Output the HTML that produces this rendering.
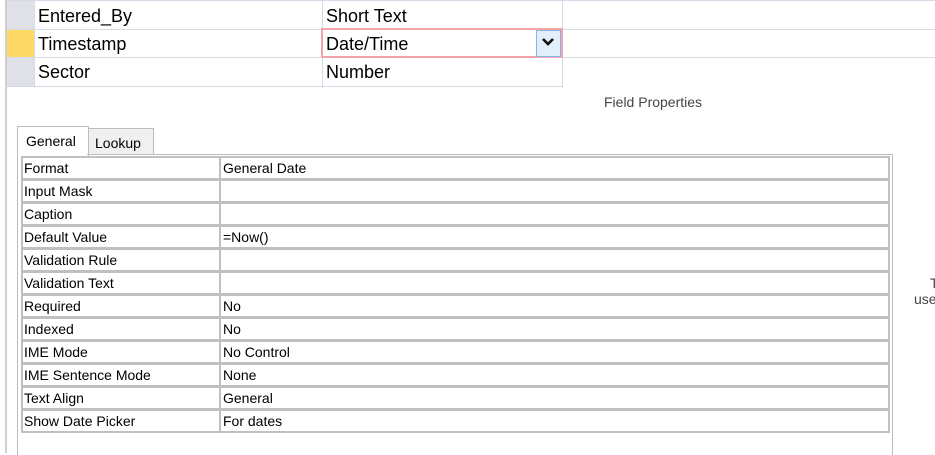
<!DOCTYPE html>
<html><head><style>
body{margin:0;width:935px;height:453px;background:#fff;position:relative;overflow:hidden;font-family:"Liberation Sans",sans-serif;}
.a{position:absolute;}
.big{font-size:18px;color:#000;}
.sm{font-size:14px;color:#000;}
</style></head><body>
<div class="a" style="left:5px;top:0;width:2px;height:453px;background:#d0d0d0"></div>
<div class="a" style="left:7px;top:0;width:928px;height:1px;background:#d4dbe6"></div>
<div class="a" style="left:7px;top:29px;width:928px;height:1px;background:#d4dbe6"></div>
<div class="a" style="left:7px;top:57px;width:928px;height:1px;background:#d4dbe6"></div>
<div class="a" style="left:7px;top:86px;width:556px;height:1px;background:#d4dbe6"></div>
<div class="a" style="left:7px;top:1px;width:27px;height:28px;background:#dfe1e6"></div>
<div class="a" style="left:7px;top:30px;width:27px;height:27px;background:#fdd966"></div>
<div class="a" style="left:7px;top:58px;width:27px;height:28px;background:#dfe1e6"></div>
<div class="a" style="left:34px;top:0;width:1px;height:88px;background:#d4dbe6"></div>
<div class="a" style="left:322px;top:0;width:1px;height:88px;background:#d4dbe6"></div>
<div class="a" style="left:562px;top:0;width:1px;height:88px;background:#d4dbe6"></div>
<div class="a big" style="left:38px;top:6px">Entered_By</div>
<div class="a big" style="left:38px;top:34px">Timestamp</div>
<div class="a big" style="left:38px;top:62px">Sector</div>
<div class="a big" style="left:326px;top:6px">Short Text</div>
<div class="a" style="left:321px;top:28px;width:238px;height:26px;border:2px solid #f2a4aa"></div>
<div class="a big" style="left:326px;top:34px">Date/Time</div>
<div class="a big" style="left:326px;top:62px">Number</div>
<div class="a" style="left:536px;top:30px;width:23px;height:25px;background:#e3eefb;border:1px solid #86b6ea"></div>
<svg class="a" style="left:540px;top:36px" width="16" height="12"><path d="M3 3 L8 8 L13 3" stroke="#111" stroke-width="2.6" fill="none"/></svg>
<div class="a" style="left:604px;top:94px;font-size:14px;color:#444">Field Properties</div>
<div class="a" style="left:17px;top:126px;width:70px;height:30px;border:1px solid #bdbdbd;border-bottom:none;background:#fff"></div>
<div class="a sm" style="left:26px;top:133px">General</div>
<div class="a" style="left:88px;top:128px;width:64px;height:26px;border:1px solid #bdbdbd;border-bottom:none;background:#f0f0f0"></div>
<div class="a sm" style="left:95px;top:135px">Lookup</div>
<div class="a" style="left:17px;top:154px;width:874px;height:300px;border-left:1px solid #bdbdbd;border-right:1px solid #bdbdbd;border-top:1px solid #bdbdbd"></div>
<div class="a" style="left:88px;top:154px;width:64px;height:1px;background:#bdbdbd"></div>
<div class="a" style="left:18px;top:154px;width:69px;height:1px;background:#fff"></div>
<div class="a" style="left:21px;top:156px;width:869px;height:277px;background:#c0c0c0"></div>
<div id="rows"></div>
<div class="a" style="left:914px;top:275px;font-size:14px;color:#444"><span style="margin-left:16px">T</span><br>use</div>
<script>
var L=["Format","Input Mask","Caption","Default Value","Validation Rule","Validation Text","Required","Indexed","IME Mode","IME Sentence Mode","Text Align","Show Date Picker"];
var V=["General Date","","","=Now()","","","No","No","No Control","None","General","For dates"];
var h="";
for(var i=0;i<12;i++){var t=158+23*i;
h+='<div class="a" style="left:23px;top:'+t+'px;width:196px;height:20px;background:#fff"></div>';
h+='<div class="a" style="left:221px;top:'+t+'px;width:667px;height:20px;background:#fff"></div>';
h+='<div class="a sm" style="left:24px;top:'+(t+2)+'px">'+L[i]+'</div>';
h+='<div class="a sm" style="left:223px;top:'+(t+2)+'px">'+V[i]+'</div>';}
document.getElementById("rows").innerHTML=h;
</script>
</body></html>
